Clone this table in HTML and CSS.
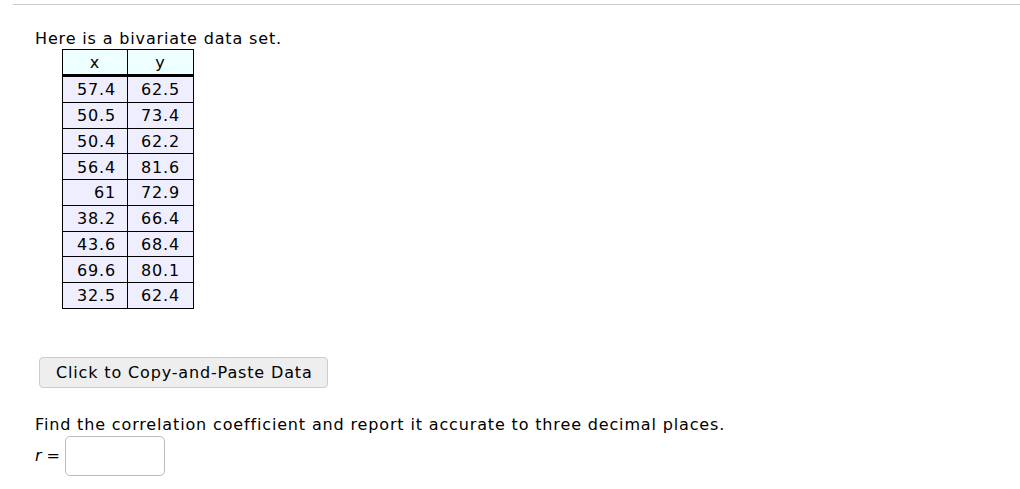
FILE: index.html
```html
<!DOCTYPE html>
<html lang="en">
<head>
    <meta charset="UTF-8">
    <title>Bivariate Data</title>
    <link rel="stylesheet" href="styles.css">
</head>
<body>

<hr class="top-rule">

<div class="question">
    <p class="intro">Here is a bivariate data set.</p>

    <table class="data-table">
        <thead>
            <tr><th class="col-x">x</th><th class="col-y">y</th></tr>
        </thead>
        <tbody>
            <tr><td>57.4</td><td>62.5</td></tr>
            <tr><td>50.5</td><td>73.4</td></tr>
            <tr><td>50.4</td><td>62.2</td></tr>
            <tr><td>56.4</td><td>81.6</td></tr>
            <tr><td>61</td><td>72.9</td></tr>
            <tr><td>38.2</td><td>66.4</td></tr>
            <tr><td>43.6</td><td>68.4</td></tr>
            <tr><td>69.6</td><td>80.1</td></tr>
            <tr><td>32.5</td><td>62.4</td></tr>
        </tbody>
    </table>

    <button class="copy-btn">Click to Copy-and-Paste Data</button>

    <p class="task">Find the correlation coefficient and report it accurate to three decimal places.</p>
    <div class="answer">
        <span class="var">r</span> =
        <input type="text" class="answer-input">
    </div>
</div>

</body>
</html>
```

FILE: styles.css
```css
body {
    margin: 0;
    font-family: "DejaVu Sans", sans-serif;
    font-size: 16px;
    letter-spacing: 0.85px;
    color: #000;
    background: #fff;
}

.top-rule {
    margin: 4px 0 0 13px;
    border: none;
    border-top: 1px solid #ccc;
    height: 0;
}

.question {
    padding: 0 35px;
}

.intro {
    margin: 24px 0 0 0;
    line-height: 20px;
}

.data-table {
    margin-left: 27px;
    border-collapse: collapse;
}

.data-table th,
.data-table td {
    border: 1px solid #000;
    padding: 1px 11px 0 0;
    height: 23.75px;
    text-align: right;
}

.data-table td + td {
    padding-right: 13px;
}

.data-table th {
    height: 24px;
    background: #eeffff;
    font-weight: normal;
    text-align: center;
    padding: 0;
    border-bottom: 3px solid #000;
}

.col-x {
    width: 64px;
}

.col-y {
    width: 65px;
}

.data-table td {
    background: #eeeeff;
}

.copy-btn {
    display: block;
    margin: 48px 0 0 4px;
    font-family: inherit;
    font-size: 16px;
    letter-spacing: 0.85px;
    padding: 5px 14px 5px 16px;
    background: #eee;
    border: 1px solid #ccc;
    border-radius: 4px;
    color: #000;
}

.task {
    margin: 27px 0 0 0;
}

.answer {
    margin-top: 2px;
    display: flex;
    align-items: center;
    gap: 4px;
}

.var {
    font-style: italic;
}

.answer-input {
    width: 100px;
    height: 40px;
    box-sizing: border-box;
    border: 1px solid #bbb;
    border-radius: 5px;
}
```
